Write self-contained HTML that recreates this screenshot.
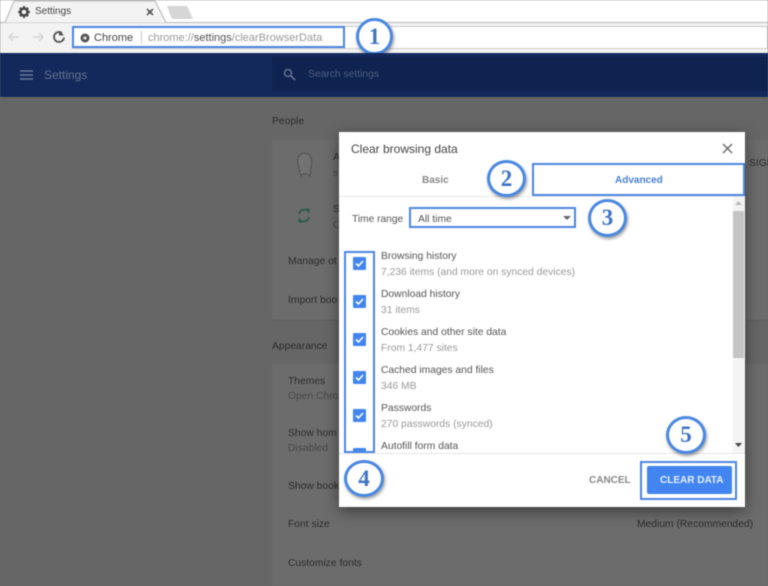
<!DOCTYPE html>
<html><head><meta charset="utf-8"><style>
html,body{margin:0;padding:0;background:#666}
body{width:768px;height:586px;overflow:hidden;position:relative;background:#666;font-family:"Liberation Sans",sans-serif;color:#333;font-size:10.3px;filter:blur(.45px)}
.a{position:absolute;white-space:nowrap}
.box{position:absolute;border:2px solid #4a86e0;box-sizing:border-box}
.num{position:absolute;box-sizing:border-box;border:3px solid #4a88e2;border-radius:50%;background:#fff;color:#3d74c6;font:bold 23px/30px "Liberation Serif",serif;text-align:center;box-shadow:1px 2px 3px rgba(0,0,0,.4)}
.d{color:#2c2c2c;font-size:10.3px}
.s{color:#484848;font-size:10.3px}
.t{color:#555;font-size:10.3px}
.u{color:#999;font-size:10.3px}
.cb{position:absolute;left:353px;width:13px;height:13px;background:#4285f0;border-radius:1px}
</style></head><body>
<div class="a" style="left:0;top:0;width:768px;height:22px;background:#fff"></div>
<div class="a" style="left:0;top:22px;width:768px;height:31px;background:#f3f3f3"></div>
<div class="a" style="left:0;top:22px;width:768px;height:1px;background:#bbb"></div>
<svg class="a" style="left:0;top:0" width="200" height="24"><path d="M0 22.500H5L14 1H155L166 22.500" fill="#f3f3f3" stroke="#b5b5b5"/><path d="M167 6H187L193 19H172Z" fill="#d6d6d6"/><path d="M147 9L153 15M153 9L147 15" stroke="#444" stroke-width="1.500"/></svg>
<svg class="a" style="left:18px;top:6px" width="12" height="12" viewBox="0 0 12 12"><circle cx="6" cy="6" r="3.600" fill="none" stroke="#444" stroke-width="2.600"/><path d="M6 0V2.500M6 9.500V12M0 6H2.500M9.500 6H12M1.800 1.800L3.500 3.500M8.500 8.500L10.200 10.200M10.200 1.800L8.500 3.500M3.500 8.500L1.800 10.200" stroke="#444" stroke-width="1.800"/></svg>
<div class="a" style="left:35px;top:6px;font-size:10px;color:#444;line-height:12px">Settings</div>
<svg class="a" style="left:6px;top:29px" width="62" height="16"><path d="M3 8H13M7 4L3 8L7 12" fill="none" stroke="#d4d4d4" stroke-width="1.500"/><path d="M27 8H37M33 4L37 8L33 12" fill="none" stroke="#d4d4d4" stroke-width="1.500"/><path d="M58 8.500A5 5 0 1 1 56 4" fill="none" stroke="#555" stroke-width="1.800"/><path d="M53 1.500V6.500H58Z" fill="#555"/></svg>
<div class="a" style="left:72px;top:26px;width:696px;height:23px;background:#fff;border:1px solid #ccc;box-sizing:border-box"></div>
<svg class="a" style="left:80px;top:33px" width="10" height="10"><circle cx="5" cy="5" r="4.500" fill="#555"/><circle cx="5" cy="5" r="1.600" fill="#ddd"/></svg>
<div class="a" style="left:94px;top:32px;font-size:11px;color:#444">Chrome</div>
<div class="a" style="left:141px;top:31px;width:1px;height:13px;background:#ccc"></div>
<div class="a" style="left:148px;top:32px;font-size:11px;color:#999">chrome://<span style="color:#555">settings</span>/clearBrowserData</div>
<div class="box" style="left:72px;top:26px;width:273px;height:22px"></div>
<div class="num" style="left:356px;top:18px;width:37px;height:37px;line-height:32px">1</div>
<div class="a" style="left:0;top:53px;width:768px;height:44px;background:#13295c"></div>
<div class="a" style="left:272px;top:57px;width:496px;height:34px;background:#0f2350"></div>
<svg class="a" style="left:20px;top:70px" width="14" height="10"><path d="M0 1H13M0 5H13M0 9H13" stroke="#6a7a98" stroke-width="1.400"/></svg>
<div class="a" style="left:44px;top:68px;font-size:12px;color:#65738f">Settings</div>
<svg class="a" style="left:283px;top:68px" width="13" height="13"><circle cx="5" cy="5" r="3.500" fill="none" stroke="#65738f" stroke-width="1.500"/><path d="M8 8L12 12" stroke="#65738f" stroke-width="1.700"/></svg>
<div class="a" style="left:308px;top:69px;font-size:10.300px;color:#4d5d7e">Search settings</div>
<div class="a" style="left:272px;top:140px;width:496px;height:180px;background:#6c6c6c"></div>
<div class="a" style="left:272px;top:364px;width:496px;height:222px;background:#6c6c6c"></div>
<div class="a" style="left:272px;top:320px;width:496px;height:1px;background:#5c5c5c"></div>
<div class="a d" style="left:272px;top:116px">People</div>
<svg class="a" style="left:295px;top:152px" width="20" height="27"><path d="M4 16C1 8 3 2 9 1C16 1 18 8 16 16L15 24C12 21 8 21 6 24Z" fill="#727272" stroke="#505050"/></svg>
<svg class="a" style="left:297px;top:208px" width="14" height="15"><path d="M2 6A5.500 5.500 0 0 1 11 3M12 9A5.500 5.500 0 0 1 3 12" fill="none" stroke="#2e5c50" stroke-width="2"/><path d="M9 0L13 1L12 6ZM5 15L1 14L2 9Z" fill="#2e5c50"/></svg>
<div class="a d" style="left:333px;top:152px">A</div><div class="a s" style="left:333px;top:168px">s</div>
<div class="a d" style="left:333px;top:204px">S</div><div class="a s" style="left:333px;top:220px">C</div>
<div class="a d" style="left:288px;top:256px">Manage ot</div>
<div class="a d" style="left:288px;top:295px">Import boo</div>
<div class="a d" style="left:272px;top:341px">Appearance</div>
<div class="a d" style="left:288px;top:376px">Themes</div><div class="a s" style="left:288px;top:391px">Open Chro</div>
<div class="a d" style="left:288px;top:428px">Show hom</div><div class="a s" style="left:288px;top:443px">Disabled</div>
<div class="a d" style="left:288px;top:481px">Show book</div>
<div class="a d" style="left:288px;top:519px">Font size</div>
<div class="a d" style="left:288px;top:558px">Customize fonts</div>
<div class="a d" style="left:637px;top:519px">Medium (Recommended)</div>
<div class="a d" style="left:749px;top:158px">SIGN</div>
<div class="a" style="left:339px;top:132px;width:406px;height:375px;background:#fff;box-shadow:0 4px 14px rgba(0,0,0,.45)"></div>
<div class="a" style="left:351px;top:142px;font-size:12px;color:#444">Clear browsing data</div>
<svg class="a" style="left:722px;top:143px" width="11" height="11"><path d="M1 1L10 10M10 1L1 10" stroke="#666" stroke-width="1.400"/></svg>
<div class="a" style="left:422px;top:175px;font-size:10px;font-weight:bold;color:#888">Basic</div>
<div class="a" style="left:339px;top:196px;width:406px;height:1px;background:#e8e8e8"></div>
<div class="box" style="left:532px;top:163px;width:213px;height:33px"></div>
<div class="a" style="left:615px;top:175px;font-size:10px;font-weight:bold;color:#4a7fd0">Advanced</div>
<div class="num" style="left:487px;top:160px;width:39px;height:37px;line-height:31px">2</div>
<div class="a" style="left:352px;top:214px;font-size:10.200px;color:#555">Time range</div>
<div class="box" style="left:409px;top:207px;width:167px;height:21px"></div>
<div class="a" style="left:418px;top:214px;font-size:10.300px;color:#555">All time</div>
<svg class="a" style="left:563px;top:216px" width="9" height="5"><path d="M0 0H8L4 4Z" fill="#666"/></svg>
<div class="num" style="left:588px;top:199px;width:39px;height:38px;line-height:32px">3</div>
<div class="a" style="left:733px;top:197px;width:12px;height:256px;background:#f4f4f4"></div>
<div class="a" style="left:733px;top:211px;width:11px;height:147px;background:#c4c4c4"></div>
<svg class="a" style="left:735px;top:201px" width="8" height="5"><path d="M0 4H7L3.500 0Z" fill="#bbb"/></svg>
<svg class="a" style="left:735px;top:443px" width="8" height="5"><path d="M0 0H7L3.500 4Z" fill="#444"/></svg>
<div class="a t" style="left:381px;top:251px">Browsing history</div><div class="a u" style="left:381px;top:267px">7,236 items (and more on synced devices)</div>
<div class="a t" style="left:381px;top:289px">Download history</div><div class="a u" style="left:381px;top:305px">31 items</div>
<div class="a t" style="left:381px;top:327px">Cookies and other site data</div><div class="a u" style="left:381px;top:343px">From 1,477 sites</div>
<div class="a t" style="left:381px;top:365px">Cached images and files</div><div class="a u" style="left:381px;top:381px">346 MB</div>
<div class="a t" style="left:381px;top:403px">Passwords</div><div class="a u" style="left:381px;top:419px">270 passwords (synced)</div>
<div class="a t" style="left:381px;top:441px">Autofill form data</div>
<div class="cb" style="top:257px"><svg width="13" height="13"><path d="M3 6.500L5.500 9L10 4" fill="none" stroke="#fff" stroke-width="1.600"/></svg></div>
<div class="cb" style="top:295px"><svg width="13" height="13"><path d="M3 6.500L5.500 9L10 4" fill="none" stroke="#fff" stroke-width="1.600"/></svg></div>
<div class="cb" style="top:333px"><svg width="13" height="13"><path d="M3 6.500L5.500 9L10 4" fill="none" stroke="#fff" stroke-width="1.600"/></svg></div>
<div class="cb" style="top:371px"><svg width="13" height="13"><path d="M3 6.500L5.500 9L10 4" fill="none" stroke="#fff" stroke-width="1.600"/></svg></div>
<div class="cb" style="top:409px"><svg width="13" height="13"><path d="M3 6.500L5.500 9L10 4" fill="none" stroke="#fff" stroke-width="1.600"/></svg></div>
<div class="cb" style="top:448px;height:5px"></div>
<div class="box" style="left:344px;top:251px;width:31px;height:202px"></div>
<div class="a" style="left:339px;top:453px;width:406px;height:1px;background:#e4e4e4"></div>
<div class="num" style="left:344px;top:460px;width:40px;height:37px;line-height:31px">4</div>
<div class="a" style="left:589px;top:475px;font-size:10px;font-weight:bold;color:#888">CANCEL</div>
<div class="box" style="left:640px;top:461px;width:97px;height:39px"></div>
<div class="a" style="left:647px;top:466px;width:85px;height:28px;background:#4285f0;border-radius:2px"></div>
<div class="a" style="left:660px;top:475px;font-size:10px;font-weight:bold;color:#e8f0fe">CLEAR DATA</div>
<div class="num" style="left:666px;top:416px;width:40px;height:38px;line-height:32px">5</div>
</body></html>
